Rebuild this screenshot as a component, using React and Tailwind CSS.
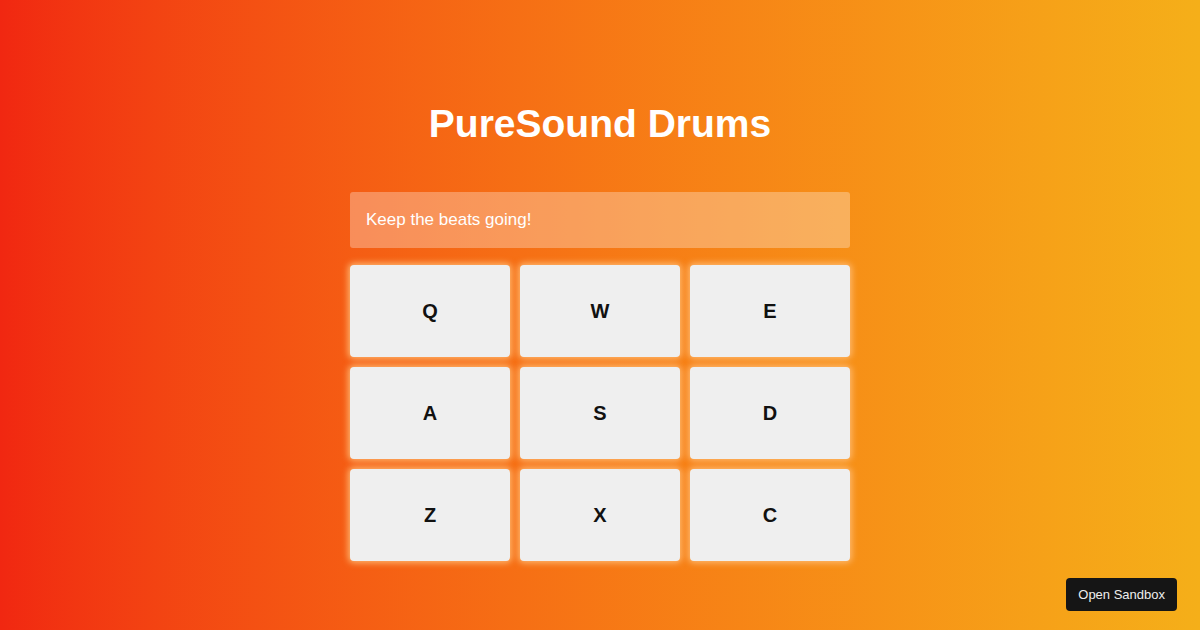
import React from 'react';

const keys = ['Q', 'W', 'E', 'A', 'S', 'D', 'Z', 'X', 'C'];

const App = () => {
  return (
    <div
      className="relative w-full h-[630px] overflow-hidden bg-gradient-to-r from-[#f12711] to-[#f5af19] flex flex-col items-center"
      style={{ fontFamily: '"Liberation Sans", Arial, sans-serif' }}
    >
      <h1 className="mt-[100px] text-[39px] leading-[48px] font-bold text-white">PureSound Drums</h1>
      <div className="mt-[44px] w-[500px]">
        <div className="h-[56px] rounded-[3px] bg-white/30 flex items-center px-4 text-[17px] text-white">
          Keep the beats going!
        </div>
        <div className="mt-[17px] grid grid-cols-3 gap-[10px]">
          {keys.map((k) => (
            <button
              key={k}
              className="h-[92px] rounded-[4px] bg-[#efefef] text-[20px] font-bold text-[#111] shadow-[0_0_6px_2px_rgba(255,190,120,0.9)]"
            >
              {k}
            </button>
          ))}
        </div>
      </div>
      <button className="absolute right-[23px] bottom-[19px] h-[33px] px-[12px] rounded-[4px] bg-[#151515] text-[13px] text-[#eee]">
        Open Sandbox
      </button>
    </div>
  );
};

export default App;
